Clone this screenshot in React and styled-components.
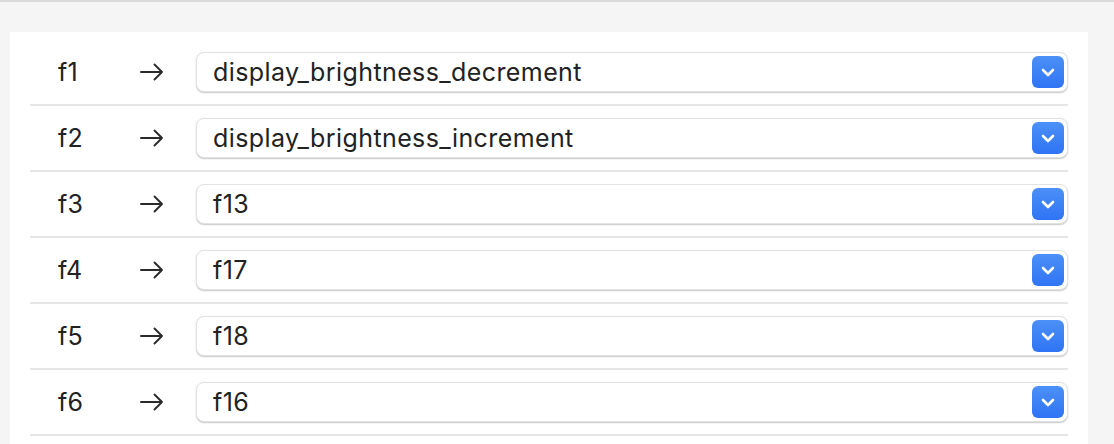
import React from "react";
import styled, { createGlobalStyle } from "styled-components";

const GlobalStyle = createGlobalStyle`
  html, body {
    margin: 0;
    padding: 0;
    background: #f5f5f5;
  }
  body {
    font-family: Inter, "Noto Sans", sans-serif;
    color: #222;
  }
`;

const rows = [
  { key: "f1", value: "display_brightness_decrement" },
  { key: "f2", value: "display_brightness_increment" },
  { key: "f3", value: "f13" },
  { key: "f4", value: "f17" },
  { key: "f5", value: "f18" },
  { key: "f6", value: "f16" },
];

const Page = styled.div`
  height: 444px;
  border-top: 2px solid #dadada;
  box-sizing: border-box;
  padding: 30px 26px 0 10px;
  overflow: hidden;
`;

const Panel = styled.div`
  background: #fff;
  height: 100%;
  padding: 8px 20px 0 20px;
`;

const Row = styled.div`
  display: flex;
  align-items: center;
  height: 64px;
  border-bottom: 2px solid #e6e6e6;
`;

const Key = styled.div`
  width: 82px;
  padding-left: 28px;
  font-size: 25px;
  letter-spacing: 0.3px;
`;

const Arrow = styled.div`
  width: 56px;
  display: flex;
  align-items: center;
`;

const Select = styled.div`
  flex: 1;
  height: 40px;
  box-sizing: border-box;
  display: flex;
  align-items: center;
  justify-content: space-between;
  padding: 0 3px 0 16px;
  border: 1px solid #e2e2e2;
  border-radius: 8px;
  box-shadow: 0 1px 1.5px rgba(0, 0, 0, 0.22);
  font-size: 25px;
  letter-spacing: 0.4px;
  background: #fff;
`;

const Stepper = styled.div`
  width: 32px;
  height: 32px;
  border-radius: 6px;
  background: linear-gradient(#4c90f8, #2f74f4);
  display: flex;
  align-items: center;
  justify-content: center;
`;

const RightArrow = () => (
  <svg width="24" height="18" viewBox="0 0 24 18">
    <path
      d="M1 9 H22 M14.5 1.5 L22 9 L14.5 16.5"
      fill="none"
      stroke="#2a2a2a"
      strokeWidth="1.9"
      strokeLinecap="round"
      strokeLinejoin="round"
    />
  </svg>
);

const Chevron = () => (
  <svg width="14" height="9" viewBox="0 0 14 9">
    <path
      d="M2 2 L7 7 L12 2"
      fill="none"
      stroke="#fff"
      strokeWidth="2.6"
      strokeLinecap="round"
      strokeLinejoin="round"
    />
  </svg>
);

export default function App() {
  return (
    <>
      <GlobalStyle />
      <Page>
        <Panel>
          {rows.map((r) => (
            <Row key={r.key}>
              <Key>{r.key}</Key>
              <Arrow>
                <RightArrow />
              </Arrow>
              <Select>
                <span>{r.value}</span>
                <Stepper>
                  <Chevron />
                </Stepper>
              </Select>
            </Row>
          ))}
        </Panel>
      </Page>
    </>
  );
}
